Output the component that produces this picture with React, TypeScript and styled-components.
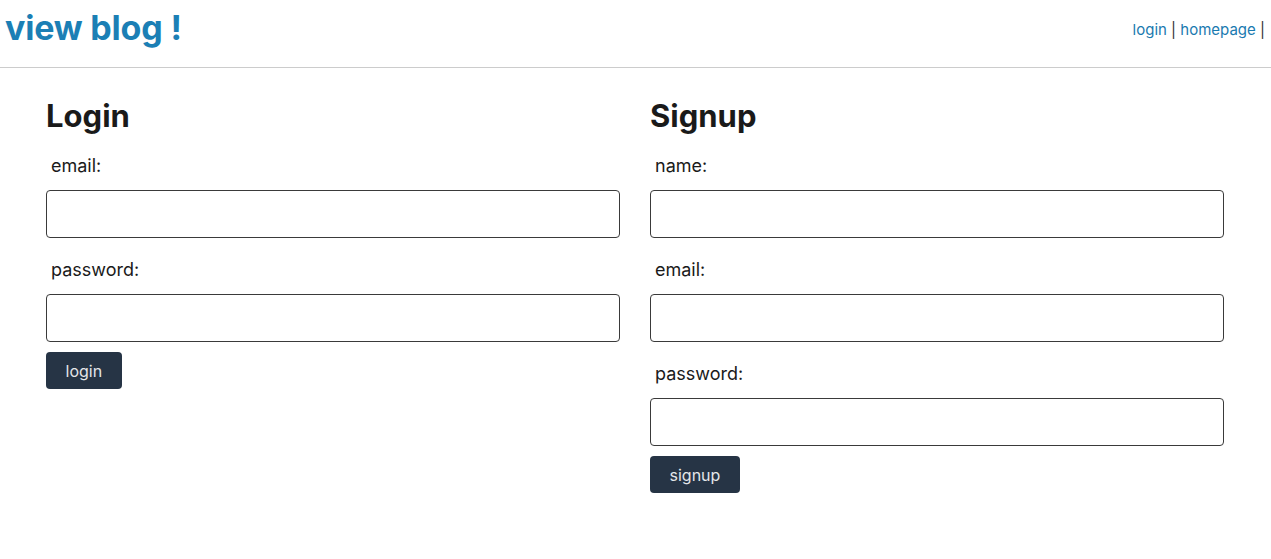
import styled, { createGlobalStyle } from "styled-components";

const GlobalStyle = createGlobalStyle`
  body {
    margin: 0;
    background: #fff;
    font-family: Inter, "Noto Sans", sans-serif;
    color: #1a1a1a;
  }
`;

const Header = styled.header`
  display: flex;
  justify-content: space-between;
  align-items: center;
  height: 68px;
  padding: 0 6px 0 5px;
  border-bottom: 1px solid #cccccc;
  box-sizing: border-box;
`;

const Brand = styled.h1`
  margin: 0;
  font-size: 34px;
  font-weight: 700;
  color: #1b7fb5;
  letter-spacing: -0.2px;
  padding-bottom: 12px;
`;

const Nav = styled.nav`
  font-size: 15px;
  color: #333;
  padding-bottom: 8px;
`;

const NavLink = styled.a`
  color: #1a7ab0;
  text-decoration: none;
`;

const Main = styled.main`
  display: flex;
  gap: 30px;
  padding: 29px 47px 0 46px;
`;

const Column = styled.section`
  flex: 1;
  display: flex;
  flex-direction: column;
`;

const Title = styled.h2`
  margin: 0 0 19px;
  font-size: 31px;
  font-weight: 700;
  line-height: 38px;
  color: #1a1a1a;
`;

const Label = styled.label`
  display: block;
  padding-left: 5px;
  font-size: 18px;
  line-height: 24px;
  color: #1a1a1a;
  margin-bottom: 12px;
`;

const Input = styled.input<{ $last?: boolean }>`
  display: block;
  width: 100%;
  height: 48px;
  box-sizing: border-box;
  border: 1px solid #3a3a3a;
  border-radius: 4px;
  margin-bottom: ${(p) => (p.$last ? "10px" : "20px")};
  font: inherit;
  padding: 0 10px;
`;

const Button = styled.button`
  align-self: flex-start;
  height: 37px;
  padding: 0 19.5px;
  background: #263445;
  color: #e4e6e9;
  border: none;
  border-radius: 4px;
  font-family: Inter, "Noto Sans", sans-serif;
  font-size: 16px;
`;

const Field = ({ label, last }: { label: string; last?: boolean }) => (
  <>
    <Label>{label}</Label>
    <Input $last={last} />
  </>
);

export default function App() {
  return (
    <>
      <GlobalStyle />
      <Header>
        <Brand>view blog !</Brand>
        <Nav>
          <NavLink href="#">login</NavLink> | <NavLink href="#">homepage</NavLink> |
        </Nav>
      </Header>
      <Main>
        <Column>
          <Title>Login</Title>
          <Field label="email:" />
          <Field label="password:" last />
          <Button>login</Button>
        </Column>
        <Column>
          <Title>Signup</Title>
          <Field label="name:" />
          <Field label="email:" />
          <Field label="password:" last />
          <Button>signup</Button>
        </Column>
      </Main>
    </>
  );
}
